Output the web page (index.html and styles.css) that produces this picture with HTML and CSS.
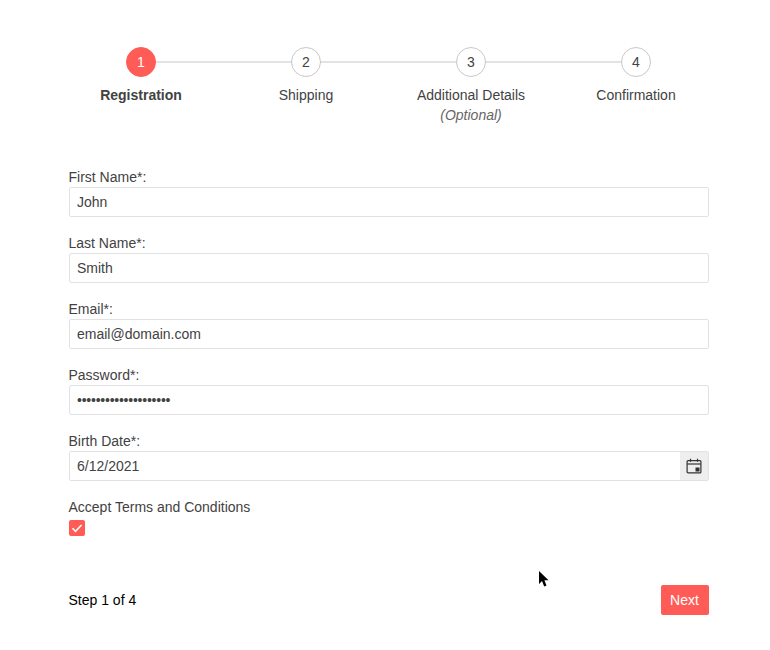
FILE: index.html
```html
<!DOCTYPE html>
<html lang="en">
<head>
    <meta charset="UTF-8">
    <meta name="viewport" content="width=device-width, initial-scale=1.0">
    <title>Registration Wizard</title>
    <link rel="stylesheet" href="styles.css">
</head>
<body>
    <div class="wizard">
        <!-- Steps -->
        <div class="steps">
            <div class="step active">
                <div class="step-number">1</div>
                <div class="step-label">Registration</div>
            </div>
            <div class="step">
                <div class="step-number">2</div>
                <div class="step-label">Shipping</div>
            </div>
            <div class="step">
                <div class="step-number">3</div>
                <div class="step-label">Additional Details</div>
                <div class="step-note">(Optional)</div>
            </div>
            <div class="step">
                <div class="step-number">4</div>
                <div class="step-label">Confirmation</div>
            </div>
        </div>

        <!-- Form -->
        <form class="form">
            <div class="field">
                <label for="first-name">First Name*:</label>
                <input type="text" id="first-name" value="John">
            </div>
            <div class="field">
                <label for="last-name">Last Name*:</label>
                <input type="text" id="last-name" value="Smith">
            </div>
            <div class="field">
                <label for="email">Email*:</label>
                <input type="text" id="email" value="email@domain.com">
            </div>
            <div class="field">
                <label for="password">Password*:</label>
                <input type="password" id="password" value="12345678901234567890">
            </div>
            <div class="field">
                <label for="birth-date">Birth Date*:</label>
                <div class="date-input">
                    <input type="text" id="birth-date" value="6/12/2021">
                    <button type="button" class="date-button" aria-label="Open calendar">
                        <svg width="16" height="16" viewBox="0 0 16 16" fill="none" stroke="#333" stroke-width="1.2">
                            <rect x="1.1" y="2.6" width="13.8" height="12.3" rx="1"/>
                            <path d="M1.1 6h13.8"/>
                            <path d="M4.500 .8v3M11.500 .8v3"/>
                            <rect x="9.500" y="9.500" width="4" height="4" fill="#333" stroke="none"/>
                        </svg>
                    </button>
                </div>
            </div>
            <div class="field">
                <label for="terms">Accept Terms and Conditions</label>
                <div class="checkbox" id="terms">
                    <svg width="16" height="16" viewBox="0 0 16 16" fill="none" stroke="#fff" stroke-width="1.6">
                        <path d="M3.500 8.300l3 3L12.500 5"/>
                    </svg>
                </div>
            </div>
        </form>

        <div class="footer">
            <span class="step-count">Step 1 of 4</span>
            <button type="button" class="next">Next</button>
        </div>
    </div>

    <svg class="cursor" width="12" height="18" viewBox="0 0 12 18">
        <path d="M1 1v13l3-3 2.200 5.400 2.300-1L6.400 10.300H10.500z" fill="#000"/>
    </svg>
</body>
</html>
```

FILE: styles.css
```css
body {
    font-family: "Liberation Sans", Arial, sans-serif;
    font-size: 14px;
    line-height: 20px;
    margin: 0;
    padding: 0;
    background: #fff;
    color: #424242;
}
.wizard {
    width: 640px;
    margin-left: 68.5px;
    padding-top: 47px;
}
.steps {
    display: flex;
    margin: 0 -10px 42px;
}
.step {
    position: relative;
    flex: 1;
    display: flex;
    flex-direction: column;
    align-items: center;
    text-align: center;
}
/* connector to the next step, runs behind the circles */
.step:not(:last-child)::after {
    content: "";
    position: absolute;
    top: 14px;
    left: 50%;
    width: 100%;
    height: 2px;
    background: #e3e3e3;
}
.step-number {
    position: relative;
    z-index: 1;
    box-sizing: border-box;
    width: 30px;
    height: 30px;
    margin-bottom: 8px;
    border: 1px solid #c8c8c8;
    border-radius: 50%;
    background: #fff;
    line-height: 28px;
}
.step.active .step-number {
    background: #ff5c58;
    border-color: #ff5c58;
    color: #fff;
}
.step.active .step-label {
    font-weight: bold;
}
.step-note {
    font-style: italic;
    color: #666;
}
.field {
    margin-bottom: 16px;
}
.field label {
    display: block;
}
input {
    display: block;
    box-sizing: border-box;
    width: 100%;
    height: 30px;
    padding: 0 7.5px;
    border: 1px solid #e2e2e2;
    border-radius: 2px;
    outline: none;
    font-family: inherit;
    font-size: 14px;
    color: #424242;
}
input[type="password"] {
    letter-spacing: -0.24px;
}
.date-input {
    display: flex;
    box-sizing: border-box;
    height: 30px;
    border: 1px solid #e2e2e2;
    border-radius: 2px;
}
.date-input input {
    flex: 1;
    height: 28px;
    border: none;
}
.date-button {
    display: flex;
    align-items: center;
    justify-content: center;
    width: 28px;
    padding: 0;
    border: none;
    background: #eee;
}
.checkbox {
    width: 16px;
    height: 16px;
    margin-top: 3px;
    border-radius: 2px;
    background: #ff5c58;
}
.checkbox svg {
    display: block;
}
.footer {
    display: flex;
    justify-content: space-between;
    align-items: center;
    margin-top: 49px;
}
.step-count {
    color: #000;
}
.next {
    width: 48px;
    height: 30px;
    padding: 0;
    border: none;
    border-radius: 2px;
    background: #ff5c58;
    color: #fff;
    font-family: inherit;
    font-size: 14px;
}
.cursor {
    position: absolute;
    left: 537.5px;
    top: 570px;
}
```
